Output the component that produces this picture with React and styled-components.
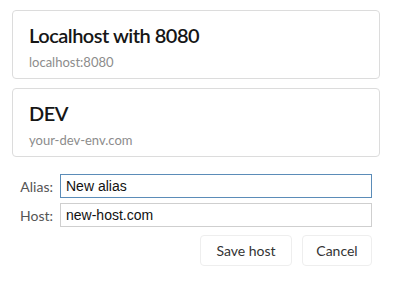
import styled, { createGlobalStyle } from "styled-components";

const hosts = [
  { alias: "Localhost with 8080", host: "localhost:8080" },
  { alias: "DEV", host: "your-dev-env.com" },
];

export default function App() {
  return (
    <Page>
      <GlobalStyle />
      {hosts.map((h) => (
        <HostCard key={h.alias}>
          <Alias>{h.alias}</Alias>
          <HostName>{h.host}</HostName>
        </HostCard>
      ))}
      <Form onSubmit={(e) => e.preventDefault()}>
        <Label htmlFor="alias">Alias:</Label>
        <Input id="alias" defaultValue="New alias" $active autoFocus />
        <Label htmlFor="host">Host:</Label>
        <Input id="host" defaultValue="new-host.com" />
      </Form>
      <Actions>
        <Button type="button" $width={92}>
          Save host
        </Button>
        <Button type="button" $width={70}>
          Cancel
        </Button>
      </Actions>
    </Page>
  );
}

const GlobalStyle = createGlobalStyle`
  body {
    margin: 0;
    background: #fff;
    font-family: Lato, "Noto Sans", sans-serif;
  }
`;

const Page = styled.div`
  display: flex;
  flex-direction: column;
  padding: 10px 13px 0 12px;
`;

const HostCard = styled.div`
  border: 1px solid #dcdcdc;
  border-radius: 4px;
  padding: 11px 16px 7px;
  margin-bottom: 9px;
`;

const Alias = styled.div`
  font-size: 20px;
  font-weight: 600;
  letter-spacing: -0.5px;
  line-height: 27px;
  color: #161616;
`;

const HostName = styled.div`
  font-size: 13px;
  line-height: 18px;
  margin-top: 4px;
  color: #8c8c8c;
`;

const Form = styled.form`
  display: grid;
  grid-template-columns: auto 1fr;
  column-gap: 7px;
  row-gap: 5px;
  align-items: center;
  margin: 8px 8px 0 8px;
`;

const Label = styled.label`
  justify-self: end;
  font-size: 14px;
  color: #555;
`;

const Input = styled.input`
  box-sizing: border-box;
  height: 24px;
  padding: 0 5px;
  border: 1px solid ${({ $active }) => ($active ? "#5b8cb8" : "#cfcfcf")};
  border-radius: 0;
  font-family: "Liberation Sans", Arial, sans-serif;
  font-size: 14px;
  color: #111;
  outline: none;
`;

const Actions = styled.div`
  display: flex;
  justify-content: flex-end;
  gap: 10px;
  margin: 8px 8px 0 0;
`;

const Button = styled.button`
  width: ${({ $width }) => $width}px;
  height: 31px;
  background: #fff;
  border: 1px solid #eeeeee;
  border-radius: 4px;
  font-family: Lato, "Noto Sans", sans-serif;
  font-size: 14px;
  color: #333;
  cursor: pointer;
`;
